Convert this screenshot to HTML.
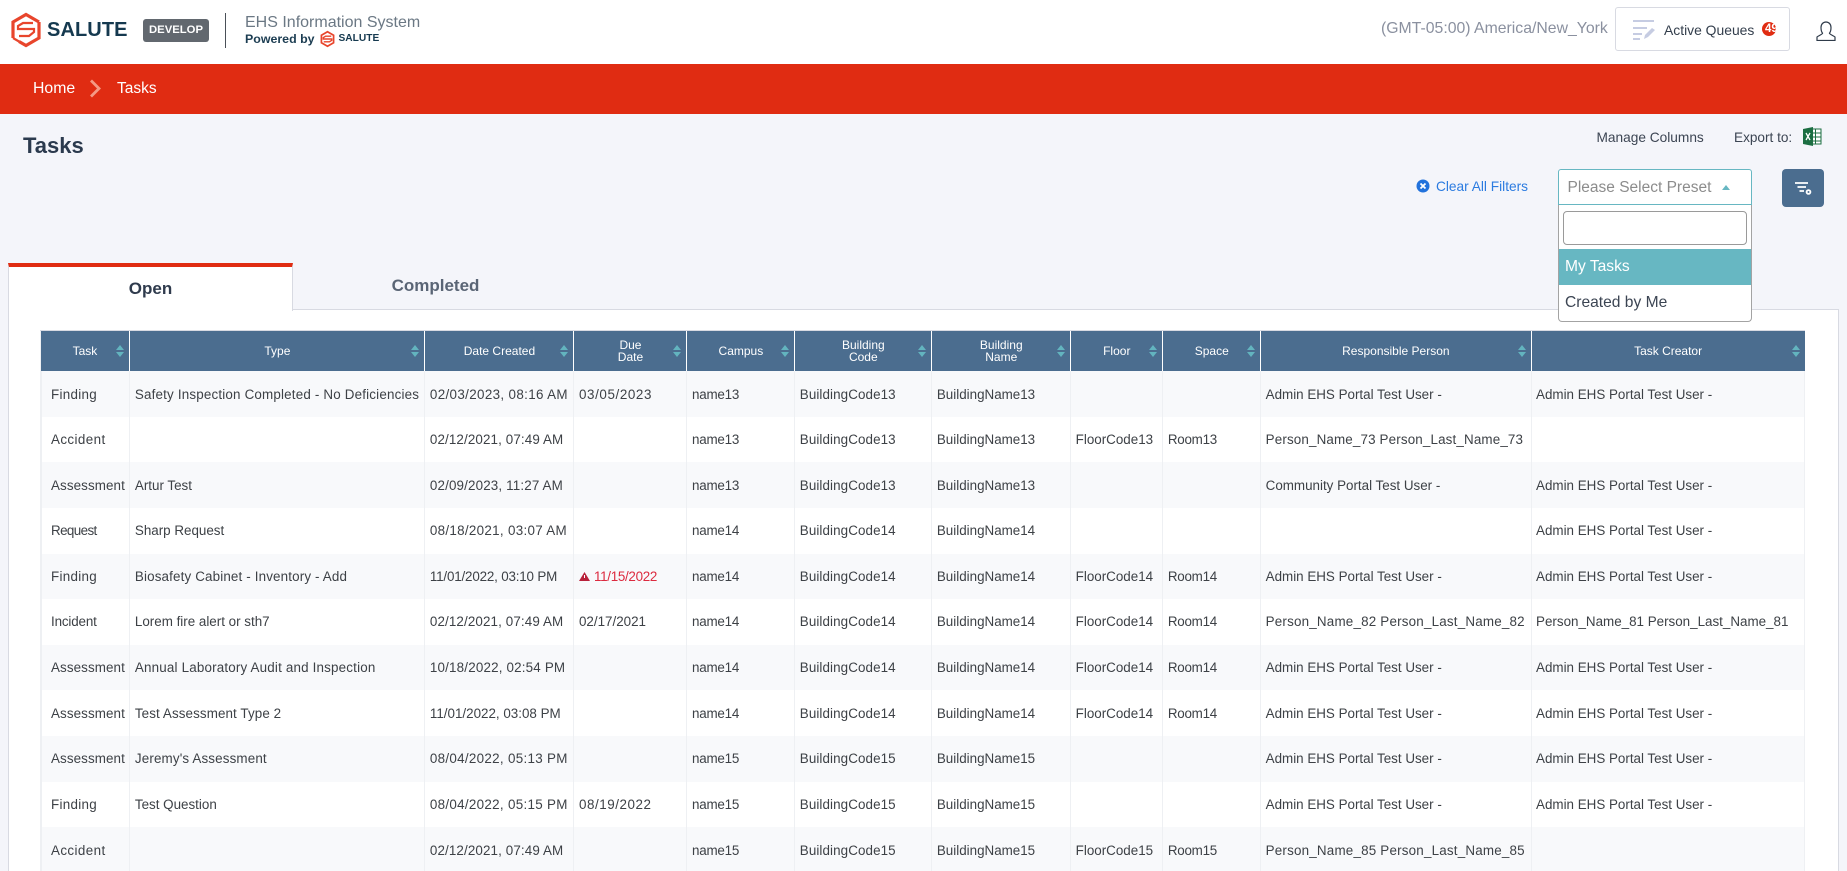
<!DOCTYPE html>
<html lang="en"><head><meta charset="utf-8"><title>Tasks</title>
<style>
*{box-sizing:border-box}
html,body{margin:0;padding:0;width:1847px;height:871px;overflow:hidden;background:#f4f5fa;font-family:"Liberation Sans",Arial,sans-serif;color:#3b4046}
#wrap{position:relative;width:1847px;height:871px;overflow:hidden;background:#f4f5fa}
.a{position:absolute;white-space:nowrap}
#top{left:0;top:0;width:1847px;height:64px;background:#fff}
#bar{left:0;top:64px;width:1847px;height:50px;background:#e02c12}
#panel{left:8px;top:309px;width:1831px;height:562px;background:#fff;border:1px solid #d8dae2;border-bottom:0}
#tab{left:8px;top:263px;width:285px;height:48px;background:#fff;border-top:4px solid #e02c12;border-right:1px solid #d8dae2;border-left:1px solid #d8dae2}
.head{position:absolute;left:40.5px;top:331px;width:1764px;height:40px;display:grid;grid-template-columns:88.9px 295px 149.1px 113px 107.8px 137.1px 138.8px 92.2px 97.8px 270.4px 274.1px;background:#4b6d8f}
.head div{position:relative;color:#fff;font-size:12px;line-height:12.5px;text-align:center;display:flex;align-items:center;justify-content:center;border-left:1px solid #fff}
.head div:first-child{border-left:0}
.head div i{position:absolute;right:5px;top:14px;width:0;height:0;border-left:4px solid transparent;border-right:4px solid transparent;border-bottom:5.5px solid #63b4bf}
.head div i+i{top:21px;border-bottom:0;border-top:5.5px solid #63b4bf}
.r{position:absolute;left:40.5px;width:1764px;height:46px;display:grid;grid-template-columns:88.9px 295px 149.1px 113px 107.8px 137.1px 138.8px 92.2px 97.8px 270.4px 274.1px;background:#fff;font-size:13.4px;line-height:46px;color:#3d4146;border-right:1px solid #eef0f3}
.r.u{line-height:47px}
.r.o{background:#f8f9fb}
.r span{display:block;padding-left:4.5px;border-left:1px solid #eef0f3;white-space:nowrap;overflow:visible;height:46px}
.r span:first-child{padding-left:9.5px}
.r span:nth-child(5){letter-spacing:-.2px}
.r span:nth-child(6){letter-spacing:.1px}
.r span:nth-child(9){letter-spacing:-.25px}
.topline{left:40px;top:330px;width:1765px;height:1px;background:#d8dae2}
.l{left:40px;top:331px;width:1px;height:540px;background:#eef0f3}
</style></head><body><div id="wrap">
<div class="a" id="top"></div>
<svg class="a" style="left:10px;top:12px" width="32" height="36" viewBox="0 0 32 36" fill="none" stroke="#e8452c" stroke-width="3.2"><path d="M3 26V10L16 2.500 29 10M29 10V26L16 33.500 9 29.500"/><path d="M3 26l6 3.500M23 11H13L8 14V17H24V20L19 24H9" stroke-width="2.200"/></svg>
<div class="a" style="left:47px;top:19px;font-size:20px;font-weight:700;line-height:23px;color:#15394f;letter-spacing:.1px">SALUTE</div>
<div class="a" style="left:143px;top:19px;width:66px;height:23px;border-radius:3px;background:#62686f;color:#fff;font-size:11.3px;font-weight:700;line-height:23px;text-align:center">DEVELOP</div>
<div class="a" style="left:225px;top:13px;width:1px;height:35px;background:#4a5058"></div>
<div class="a" style="left:245px;top:13px;font-size:16px;line-height:20px;color:#6b7884">EHS Information System</div>
<div class="a" style="left:245px;top:31px;font-size:12.4px;line-height:16px;font-weight:700;color:#1c3d52">Powered by</div>
<svg class="a" style="left:320px;top:30px" width="15" height="18" viewBox="0 0 32 36" fill="none" stroke="#e8452c" stroke-width="3.600"><path d="M3 26V10L16 2.500 29 10V26L16 33.500 3 26Z"/><path d="M24 12H12L7 15v3h18v3l-5 3H8" stroke-width="3"/></svg>
<div class="a" style="left:338.500px;top:32px;font-size:10.2px;line-height:14px;font-weight:700;color:#15394f">SALUTE</div>

<div class="a" style="left:1381px;top:19px;font-size:15.8px;line-height:19px;color:#8a909f">(GMT-05:00) America/New_York</div>
<div class="a" style="left:1615px;top:7px;width:175px;height:44px;background:#fff;border:1px solid #d8dae2;border-radius:3px"></div>
<svg class="a" style="left:1632px;top:19px" width="24" height="22" viewBox="0 0 24 22" fill="none" stroke="#c6cce2" stroke-width="2"><path d="M1 2H22M1 9H15M1 15H10M1 20H8"/><path d="M12 20l1-4 7-7 3 2-7 7z" fill="#c6cce2" stroke="none"/></svg>
<div class="a" style="left:1664px;top:21px;font-size:13.9px;line-height:19px;color:#333e4c">Active Queues</div>
<div class="a" style="left:1762px;top:22px;width:14px;height:14px;border-radius:50%;background:#e02c12;overflow:hidden;color:#fff;font-size:11.5px;font-weight:700;line-height:14px;padding-left:3px">49</div>
<svg class="a" style="left:1816px;top:21px" width="20" height="20" viewBox="0 0 20 20" fill="none" stroke="#2f3b4a" stroke-width="1.200"><path d="M6.500 12.500V12C5 10.500 5 8.500 5 6.500 5 3.300 7 1 10 1s5 2.300 5 5.500c0 2 0 4-1.500 5.500v.5c1.500 1.500 4.500 2.500 5.500 3.500v3.500H1V16c1-1 4-2 5.500-3.500z"/></svg>

<div class="a" id="bar"></div>
<div class="a" style="left:33px;top:79px;font-size:15.8px;line-height:20px;color:#fff">Home</div>
<svg class="a" style="left:89px;top:79px" width="12" height="19" viewBox="0 0 12 19" fill="none" stroke="#f49a85" stroke-width="2.800"><path d="M2 1.500l8 8-8 8"/></svg>
<div class="a" style="left:117px;top:79px;font-size:15.5px;line-height:20px;color:#fff">Tasks</div>

<div class="a" style="left:23px;top:132px;font-size:22px;line-height:28px;font-weight:700;color:#2b3a4e">Tasks</div>
<div class="a" style="left:1596.500px;top:129px;font-size:13.700px;line-height:18px;color:#3c4553">Manage Columns</div>
<div class="a" style="left:1734px;top:129px;font-size:13.600px;line-height:18px;color:#3c4553">Export to:</div>
<svg class="a" style="left:1803px;top:127px" width="19" height="19" viewBox="0 0 19 19"><rect x="7" y="2" width="11" height="15" fill="#fff" stroke="#1c6e42" stroke-width="1"/><path d="M7 6H18M7 10H18M7 14H18M12.500 2V17" stroke="#1c6e42" stroke-width="1"/><path d="M0 2L10 0V19L0 17Z" fill="#1c6e42"/><path d="M3 6l4 7M7 6l-4 7" stroke="#fff" stroke-width="1.300"/></svg>
<svg class="a" style="left:1416px;top:179px" width="14" height="14" viewBox="0 0 14 14"><circle cx="7" cy="7" r="6.500" fill="#2272dc"/><path d="M4.500 4.500l5 5M9.500 4.500l-5 5" stroke="#fff" stroke-width="1.800"/></svg>
<div class="a" style="left:1436px;top:178px;font-size:13.700px;line-height:18px;color:#2b7be0">Clear All Filters</div>
<div class="a" style="left:1558px;top:169px;width:194px;height:36px;background:#fff;border:1px solid #67b7c2;border-radius:3px 3px 0 0"></div>
<div class="a" style="left:1567.500px;top:178px;font-size:15.500px;line-height:20px;color:#8c8c8c">Please Select Preset</div>
<div class="a" style="left:1722px;top:184.500px;width:0;height:0;border-left:4px solid transparent;border-right:4px solid transparent;border-bottom:5px solid #67b7c2"></div>
<div class="a" style="left:1782px;top:169px;width:42px;height:38px;background:#4b6d8f;border-radius:4px"></div>
<svg class="a" style="left:1795px;top:181px" width="18" height="16" viewBox="0 0 18 16" fill="none"><path d="M0 2H13M2.500 6H11M4.500 10H9" stroke="#fff" stroke-width="1.800"/><circle cx="13.500" cy="11" r="2.800" fill="#fff"/><circle cx="13.500" cy="11" r="1" fill="#4b6d8f"/></svg>

<div class="a" id="panel"></div>
<div class="a" id="tab"></div>
<div class="a" style="left:8px;top:278px;width:285px;text-align:center;font-size:17px;line-height:22px;font-weight:700;color:#2f3b4d">Open</div>
<div class="a" style="left:293px;top:275px;width:285px;text-align:center;font-size:17px;line-height:22px;font-weight:700;color:#5a6575">Completed</div>

<div class="a topline"></div>
<div class="head">
<div>Task<i></i><i></i></div><div>Type<i></i><i></i></div><div>Date Created<i></i><i></i></div><div>Due<br>Date<i></i><i></i></div><div>Campus<i></i><i></i></div><div>Building<br>Code<i></i><i></i></div><div>Building<br>Name<i></i><i></i></div><div>Floor<i></i><i></i></div><div>Space<i></i><i></i></div><div>Responsible Person<i></i><i></i></div><div>Task Creator<i></i><i></i></div>
</div>
<div class="a l"></div>

<div class="r o u" style="top:371px"><span style="letter-spacing:.3px">Finding</span><span style="letter-spacing:.18px">Safety Inspection Completed - No Deficiencies</span><span style="letter-spacing:.35px">02/03/2023, 08:16 AM</span><span style="letter-spacing:.6px">03/05/2023</span><span>name13</span><span>BuildingCode13</span><span>BuildingName13</span><span></span><span></span><span>Admin EHS Portal Test User -</span><span>Admin EHS Portal Test User -</span></div>
<div class="r" style="top:416.600px"><span style="letter-spacing:.4px">Accident</span><span></span><span style="letter-spacing:.12px">02/12/2021, 07:49 AM</span><span></span><span>name13</span><span>BuildingCode13</span><span>BuildingName13</span><span>FloorCode13</span><span>Room13</span><span style="letter-spacing:.15px">Person_Name_73 Person_Last_Name_73</span><span></span></div>
<div class="r o u" style="top:462.300px"><span style="letter-spacing:.1px">Assessment</span><span>Artur Test</span><span style="letter-spacing:.15px">02/09/2023, 11:27 AM</span><span></span><span>name13</span><span>BuildingCode13</span><span>BuildingName13</span><span></span><span></span><span>Community Portal Test User -</span><span>Admin EHS Portal Test User -</span></div>
<div class="r" style="top:507.900px"><span style="letter-spacing:-.6px">Request</span><span>Sharp Request</span><span style="letter-spacing:.3px">08/18/2021, 03:07 AM</span><span></span><span>name14</span><span>BuildingCode14</span><span>BuildingName14</span><span></span><span></span><span></span><span>Admin EHS Portal Test User -</span></div>
<div class="r o" style="top:553.500px"><span style="letter-spacing:.3px">Finding</span><span style="letter-spacing:.15px">Biosafety Cabinet - Inventory - Add</span><span style="letter-spacing:-.18px">11/01/2022, 03:10 PM</span><span style="color:#dc2a3f;letter-spacing:-.3px"><svg width="11" height="9" viewBox="0 0 11 9" style="margin-right:4px"><path d="M5.500 0L11 9H0Z" fill="#b8213a"/><path d="M5.500 3v3" stroke="#fff"/></svg>11/15/2022</span><span>name14</span><span>BuildingCode14</span><span>BuildingName14</span><span>FloorCode14</span><span>Room14</span><span>Admin EHS Portal Test User -</span><span>Admin EHS Portal Test User -</span></div>
<div class="r" style="top:599.200px"><span style="letter-spacing:-.15px">Incident</span><span>Lorem fire alert or sth7</span><span style="letter-spacing:.12px">02/12/2021, 07:49 AM</span><span>02/17/2021</span><span>name14</span><span>BuildingCode14</span><span>BuildingName14</span><span>FloorCode14</span><span>Room14</span><span style="letter-spacing:.2px">Person_Name_82 Person_Last_Name_82</span><span>Person_Name_81 Person_Last_Name_81</span></div>
<div class="r o" style="top:644.800px"><span style="letter-spacing:.1px">Assessment</span><span style="letter-spacing:.18px">Annual Laboratory Audit and Inspection</span><span style="letter-spacing:.18px">10/18/2022, 02:54 PM</span><span></span><span>name14</span><span>BuildingCode14</span><span>BuildingName14</span><span>FloorCode14</span><span>Room14</span><span>Admin EHS Portal Test User -</span><span>Admin EHS Portal Test User -</span></div>
<div class="r u" style="top:690.400px"><span style="letter-spacing:.1px">Assessment</span><span style="letter-spacing:.1px">Test Assessment Type 2</span><span>11/01/2022, 03:08 PM</span><span></span><span>name14</span><span>BuildingCode14</span><span>BuildingName14</span><span>FloorCode14</span><span>Room14</span><span>Admin EHS Portal Test User -</span><span>Admin EHS Portal Test User -</span></div>
<div class="r o" style="top:736px"><span style="letter-spacing:.1px">Assessment</span><span style="letter-spacing:.15px">Jeremy's Assessment</span><span style="letter-spacing:.3px">08/04/2022, 05:13 PM</span><span></span><span>name15</span><span>BuildingCode15</span><span>BuildingName15</span><span></span><span></span><span>Admin EHS Portal Test User -</span><span>Admin EHS Portal Test User -</span></div>
<div class="r" style="top:781.700px"><span style="letter-spacing:.3px">Finding</span><span>Test Question</span><span style="letter-spacing:.3px">08/04/2022, 05:15 PM</span><span style="letter-spacing:.55px">08/19/2022</span><span>name15</span><span>BuildingCode15</span><span>BuildingName15</span><span></span><span></span><span>Admin EHS Portal Test User -</span><span>Admin EHS Portal Test User -</span></div>
<div class="r o u" style="top:827.300px"><span style="letter-spacing:.4px">Accident</span><span></span><span style="letter-spacing:.12px">02/12/2021, 07:49 AM</span><span></span><span>name15</span><span>BuildingCode15</span><span>BuildingName15</span><span>FloorCode15</span><span>Room15</span><span style="letter-spacing:.2px">Person_Name_85 Person_Last_Name_85</span><span></span></div>

<div class="a" style="left:1558px;top:205px;width:194px;height:117px;background:#fff;border:1px solid #a3a3a3;border-top:0;border-radius:0 0 4px 4px;z-index:3"></div>
<div class="a" style="left:1563px;top:211px;width:184px;height:34px;background:#fff;border:1px solid #9a9a9a;border-radius:4px;z-index:4"></div>
<div class="a" style="left:1559px;top:249px;width:192px;height:36px;background:#67b7c2;color:#fff;font-size:15.600px;line-height:36px;padding-left:6px;z-index:4">My Tasks</div>
<div class="a" style="left:1559px;top:285px;width:192px;height:36px;color:#3c4553;font-size:15.600px;line-height:36px;padding-left:6px;z-index:4">Created by Me</div>
</div></body></html>
